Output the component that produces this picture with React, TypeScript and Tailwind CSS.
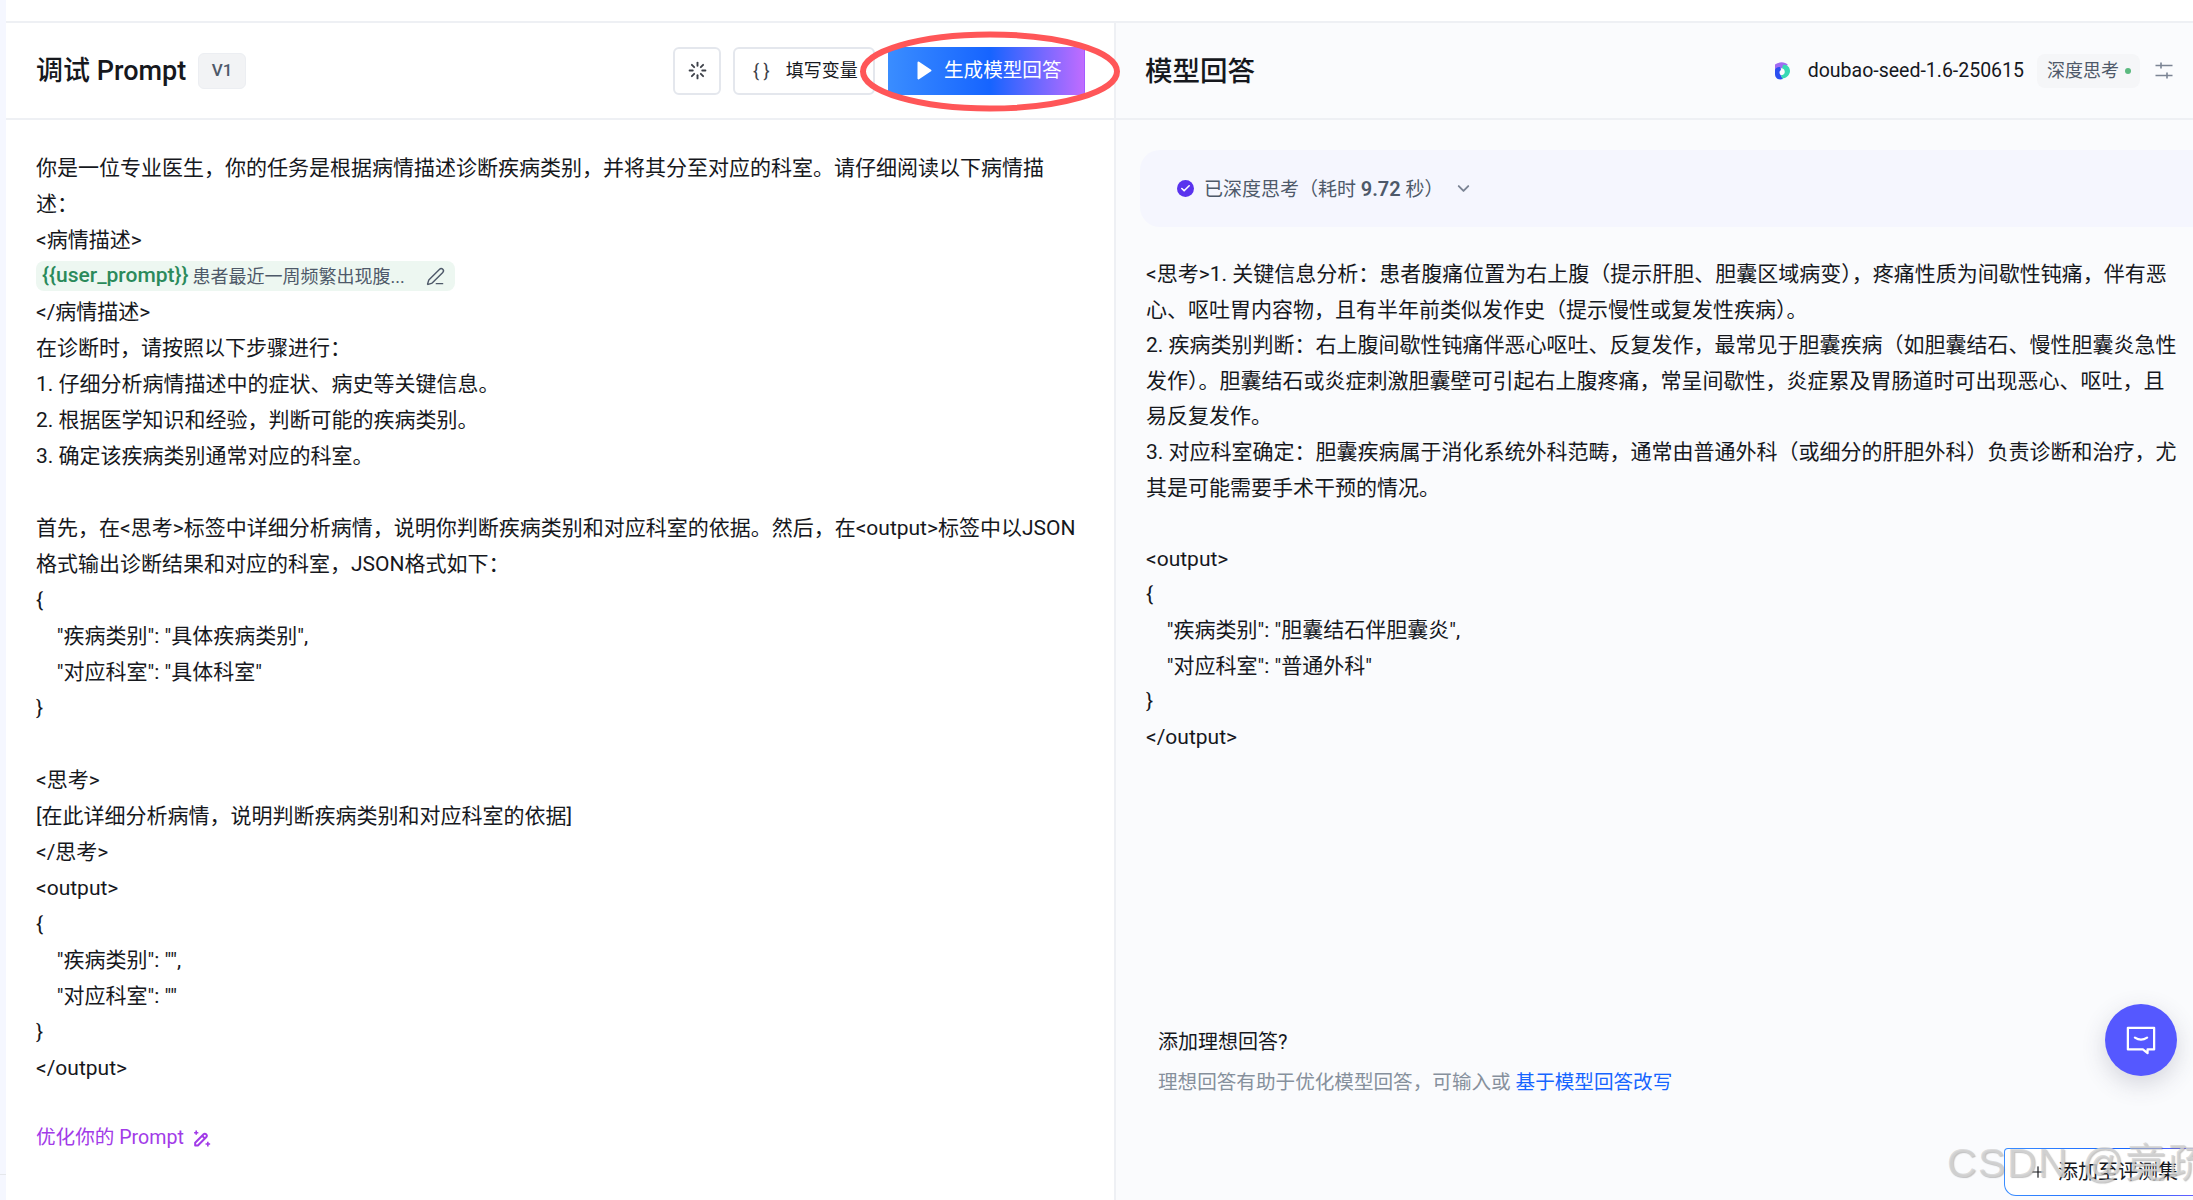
import React from "react";
import { Loader, PenLine, ChevronDown, Check, Plus } from "lucide-react";

const promptLines = [
  "你是一位专业医生，你的任务是根据病情描述诊断疾病类别，并将其分至对应的科室。请仔细阅读以下病情描",
  "述：",
  "<病情描述>",
  "@pill",
  "</病情描述>",
  "在诊断时，请按照以下步骤进行：",
  "1. 仔细分析病情描述中的症状、病史等关键信息。",
  "2. 根据医学知识和经验，判断可能的疾病类别。",
  "3. 确定该疾病类别通常对应的科室。",
  "",
  "首先，在<思考>标签中详细分析病情，说明你判断疾病类别和对应科室的依据。然后，在<output>标签中以JSON",
  "格式输出诊断结果和对应的科室，JSON格式如下：",
  "{",
  '    "疾病类别": "具体疾病类别",',
  '    "对应科室": "具体科室"',
  "}",
  "",
  "<思考>",
  "[在此详细分析病情，说明判断疾病类别和对应科室的依据]",
  "</思考>",
  "<output>",
  "{",
  '    "疾病类别": "",',
  '    "对应科室": ""',
  "}",
  "</output>",
];

const answerLines = [
  "<思考>1. 关键信息分析：患者腹痛位置为右上腹（提示肝胆、胆囊区域病变），疼痛性质为间歇性钝痛，伴有恶",
  "心、呕吐胃内容物，且有半年前类似发作史（提示慢性或复发性疾病）。",
  "2. 疾病类别判断：右上腹间歇性钝痛伴恶心呕吐、反复发作，最常见于胆囊疾病（如胆囊结石、慢性胆囊炎急性",
  "发作）。胆囊结石或炎症刺激胆囊壁可引起右上腹疼痛，常呈间歇性，炎症累及胃肠道时可出现恶心、呕吐，且",
  "易反复发作。",
  "3. 对应科室确定：胆囊疾病属于消化系统外科范畴，通常由普通外科（或细分的肝胆外科）负责诊断和治疗，尤",
  "其是可能需要手术干预的情况。",
  "",
  "<output>",
  "{",
  '    "疾病类别": "胆囊结石伴胆囊炎",',
  '    "对应科室": "普通外科"',
  "}",
  "</output>",
];

const VariablePill = () => (
  <div className="flex h-9 items-center">
    <div className="flex h-[30px] w-[419px] items-center rounded-lg bg-[#edf7f1] pl-[6px]">
      <span className="text-[21px] font-medium text-[#2b8a5b]">{"{{user_prompt}}"}</span>
      <span className="ml-[4px] text-[18px] text-[#4e5969]">患者最近一周频繁出现腹...</span>
      <PenLine className="ml-auto mr-[10px] h-[19px] w-[19px] text-[#4e5969]" strokeWidth={1.8} />
    </div>
  </div>
);

const PencilSpark = () => (
  <svg viewBox="0 0 18 18" className="ml-[8px] h-[19px] w-[19px]" fill="none" stroke="#a23be8" strokeWidth="1.9" strokeLinejoin="round">
    <path d="M3 13 11 5a1.6 1.6 0 0 1 2.3 0l.3.3a1.6 1.6 0 0 1 0 2.3L5.6 15.6H3V13Z" />
    <path d="m9.6 6.4 2.5 2.5" />
    <path d="M4 1.5v4M2 3.5h4" strokeWidth="1.5" />
    <path d="M15 12v4.5M12.8 14.2h4.4" strokeWidth="1.5" />
  </svg>
);

const DoubaoLogo = () => (
  <svg viewBox="0 0 20 20" className="h-5 w-5">
    <path d="M3 3.5C7 0.5 13 0.5 16 4L8 8C6 9 5 11 5 13L3 12Z" fill="#a26bf2" />
    <path d="M3 10C3 7 5 6 8 6L9 9C7 10 7 13 9 14.5L11 18C6 19.5 3 17 3 13Z" fill="#2b4ff0" />
    <path d="M11 4C15 3 18 6.5 18 10C18 14 14 17.5 10 17.5L9 14C11.5 14.5 13.5 12 12.5 9.5C12 8 11 7.5 10 7.5Z" fill="#38d9b4" />
  </svg>
);

const SliderIcon = () => (
  <svg viewBox="0 0 18 17" className="ml-[15px] h-[17px] w-[18px]" fill="none" stroke="#7b8494" strokeWidth="1.6">
    <path d="M0.5 3.5h17M6 0.5v6" />
    <path d="M0.5 13.5h17M12 10.5v6" />
  </svg>
);

const PlayIcon = () => (
  <svg viewBox="0 0 15 19" className="mr-[12px] h-[19px] w-[15px]" fill="white" stroke="white" strokeWidth="2" strokeLinejoin="round">
    <path d="M1.5 1.5 13.5 9.5 1.5 17.5Z" />
  </svg>
);

const ChatIcon = () => (
  <svg viewBox="0 0 34 32" className="h-[30px] w-[34px]" fill="none" stroke="white" strokeWidth="2.4" strokeLinejoin="round" strokeLinecap="round">
    <path d="M3 3h28v23h-7v4l-5-4H3Z" />
    <path d="M10.5 13.5c4 2.6 9 2.6 13 0" />
  </svg>
);

export default function App() {
  return (
    <div className="relative flex h-[1200px] w-[2193px] overflow-hidden bg-white font-['Roboto','Noto_Sans_CJK_SC',sans-serif] text-[21px] text-[#16181d]">
      <div className="h-full w-[6px] shrink-0 bg-[#f5f7ff]">
        <div className="h-[1175px] border-b border-[#e5e7eb]" />
      </div>

      <div className="flex min-w-0 flex-1 flex-col">
        <div className="h-[23px] shrink-0 border-b-2 border-[#eef0f4]" />
        <div className="flex min-h-0 flex-1">
          {/* left */}
          <div className="flex w-[1110px] shrink-0 flex-col border-r-2 border-[#eef0f4]">
            <div className="flex h-[97px] shrink-0 items-center border-b-2 border-[#eef0f4] pl-[30px]">
              <h1 className="pt-[2px] text-[27px] font-medium leading-none">调试 Prompt</h1>
              <span className="ml-[12px] flex h-9 w-[48px] items-center justify-center rounded-md border border-[#eceef2] bg-[#f2f3f5] text-[17px] font-medium text-[#4e5969]">V1</span>
              <button className="ml-auto flex h-12 w-12 items-center justify-center rounded-md border-2 border-[#e4e7ed] bg-white">
                <Loader className="h-[19px] w-[19px] text-[#3d4149]" strokeWidth={2.4} />
              </button>
              <button className="ml-3 flex h-12 w-[142px] items-center rounded-md border-2 border-[#e4e7ed] bg-white pl-[18px] text-[18px]">
                <span className="mr-[16px] text-[#3d4149]">{"{ }"}</span>
                填写变量
              </button>
              <button className="ml-[13px] mr-[29px] flex h-12 w-[197px] items-center rounded-[3px] border-r border-[#a45cff] bg-[linear-gradient(90deg,#3a8dff_0%,#1664ff_52%,#c06cff_100%)] pl-[29px] text-[19.6px] text-white">
                <PlayIcon />
                生成模型回答
              </button>
            </div>
            <div className="flex-1 pl-[30px] pt-[30px]">
              {promptLines.map((line, i) =>
                line === "@pill" ? (
                  <VariablePill key={i} />
                ) : (
                  <div key={i} className="h-9 whitespace-pre leading-9">
                    {line}
                  </div>
                )
              )}
              <div className="mt-[34px] flex h-9 items-center text-[19.6px] text-[#a23be8]">
                优化你的 Prompt
                <PencilSpark />
              </div>
            </div>
          </div>

          {/* right */}
          <div className="flex min-w-0 flex-1 flex-col bg-[#fafbfd]">
            <div className="flex h-[97px] shrink-0 items-center border-b-2 border-[#eef0f4] pl-[29px]">
              <h2 className="pt-[2px] text-[27.5px] font-medium leading-none">模型回答</h2>
              <div className="ml-auto flex items-center">
                <DoubaoLogo />
                <span className="ml-[16px] text-[19.5px]">doubao-seed-1.6-250615</span>
                <div className="ml-[13px] flex h-[34px] w-[103px] items-center rounded-lg bg-[#f5f6f8] pl-[10px] text-[18px] text-[#4e5969]">
                  深度思考
                  <span className="ml-[6px] h-[6px] w-[6px] rounded-full bg-[#5bb97f]" />
                </div>
                <SliderIcon />
                <span className="w-5" />
              </div>
            </div>
            <div className="flex min-h-0 flex-1 flex-col">
              <div className="ml-6 mt-[30px] flex h-[77px] shrink-0 items-center rounded-l-[20px] bg-[#f5f6fe] pl-[37px] text-[19px] text-[#4e5969]">
                <span className="flex h-[17px] w-[17px] items-center justify-center rounded-full bg-[#5a33ee]">
                  <Check className="h-[11px] w-[11px] text-white" strokeWidth={3.5} />
                </span>
                <span className="ml-[10px] pt-[1px]">已深度思考（耗时 <span className="text-[20px] font-semibold">9.72</span> 秒）</span>
                <ChevronDown className="ml-[11px] h-[19px] w-[19px] text-[#7b8494]" strokeWidth={2.4} />
              </div>
              <div className="mt-[30px] pl-[30px]">
                {answerLines.map((line, i) => (
                  <div key={i} className="h-[35.6px] whitespace-pre leading-[35.6px]">
                    {line}
                  </div>
                ))}
              </div>
              <div className="mt-auto pl-[42px] text-[20px]">
                <div className="h-9 leading-9">添加理想回答?</div>
                <div className="mt-[5px] h-9 text-[19.6px] leading-9 text-[#86909c]">
                  理想回答有助于优化模型回答，可输入或 <span className="text-[#1664ff]">基于模型回答改写</span>
                </div>
              </div>
              <div className="mb-[4px] mt-[47px] flex justify-end">
                <div className="-mr-[60px] h-12 w-[249px] rounded-bl-xl rounded-tl-sm bg-[linear-gradient(90deg,#3a8dff,#1664ff_50%,#b05cff)] p-[1px]">
                  <button className="flex h-full w-full items-center rounded-bl-[11px] rounded-tl-[3px] bg-white pl-[24px] text-[20px]">
                    <Plus className="mr-[11px] h-[18px] w-[18px]" strokeWidth={1.6} />
                    添加至评测集
                  </button>
                </div>
              </div>
            </div>
          </div>
        </div>
      </div>

      {/* chat button */}
      <div className="absolute left-[2105px] top-[1004px] flex h-[72px] w-[72px] items-center justify-center rounded-full bg-[#5558ff] shadow-[0_8px_24px_rgba(60,60,90,0.2)]">
        <ChatIcon />
      </div>

      {/* annotation ellipse */}
      <svg className="pointer-events-none absolute left-[858px] top-[30px]" width="264" height="83" viewBox="0 0 264 83" fill="none">
        <ellipse cx="132" cy="41.5" rx="127" ry="37" stroke="#ff5658" strokeWidth="6" />
      </svg>

      {/* watermark */}
      <div className="pointer-events-none absolute left-[1947px] top-[1138px] whitespace-nowrap font-['Liberation_Sans','Noto_Sans_CJK_SC',sans-serif] text-[41px] leading-[50px] tracking-[1.5px] text-[#d4d4d4]/80 [text-shadow:1px_1px_1px_rgba(120,120,120,0.45)]">
        CSDN @竟疏
      </div>
    </div>
  );
}
